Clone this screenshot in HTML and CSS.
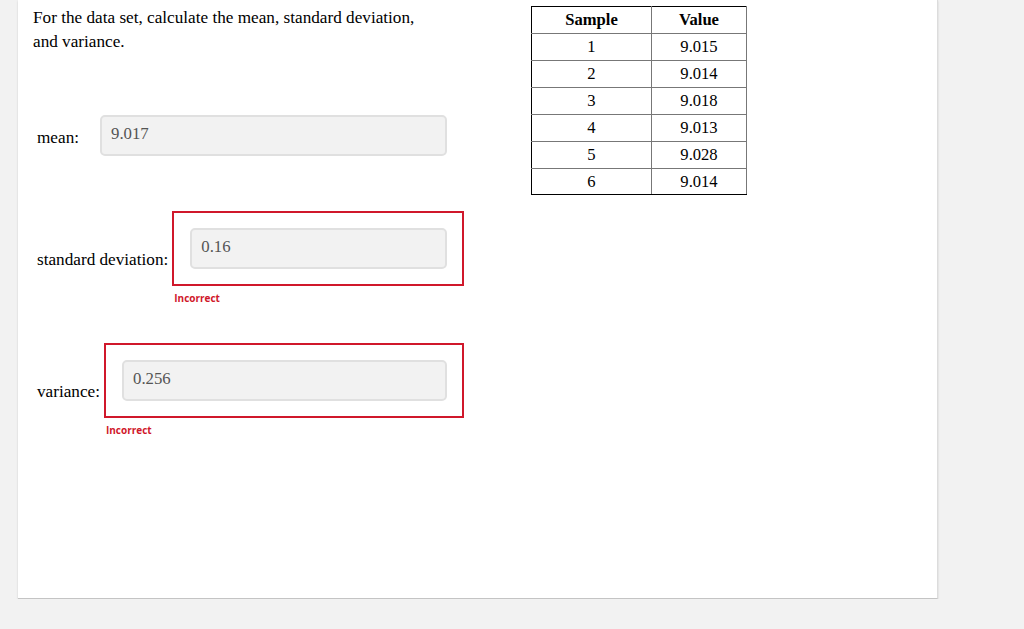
FILE: index.html
```html
<!DOCTYPE html>
<html>
<head>
<meta charset="utf-8">
<link rel="stylesheet" href="styles.css">
</head>
<body>
<div class="card">
  <div class="left">
    <p class="question">For the data set, calculate the mean, standard deviation, and variance.</p>

    <div class="row row-mean">
      <span class="label label-mean">mean:</span>
      <div class="field">
        <div class="input">9.017</div>
      </div>
    </div>

    <div class="row row-sd">
      <span class="label">standard deviation:</span>
      <div class="fieldcol">
        <div class="field wrong">
          <div class="input">0.16</div>
        </div>
        <div class="feedback">Incorrect</div>
      </div>
    </div>

    <div class="row row-var">
      <span class="label">variance:</span>
      <div class="fieldcol">
        <div class="field wrong">
          <div class="input">0.256</div>
        </div>
        <div class="feedback fb-var">Incorrect</div>
      </div>
    </div>
  </div>

  <table class="data">
    <thead>
      <tr><th class="c1">Sample</th><th class="c2">Value</th></tr>
    </thead>
    <tbody>
      <tr><td>1</td><td>9.015</td></tr>
      <tr><td>2</td><td>9.014</td></tr>
      <tr><td>3</td><td>9.018</td></tr>
      <tr><td>4</td><td>9.013</td></tr>
      <tr><td>5</td><td>9.028</td></tr>
      <tr><td>6</td><td>9.014</td></tr>
    </tbody>
  </table>
</div>
</body>
</html>
```
FILE: styles.css
```css
html, body {
  margin: 0;
  padding: 0;
  background: #f2f2f2;
}
body {
  font-family: "Liberation Serif", "Times New Roman", serif;
  font-size: 17.2px;
  color: #000;
}
.card {
  margin-left: 18px;
  width: 920px;
  height: 599px;
  background: #fff;
  border-bottom: 1px solid #c4c4c4;
  border-right: 1px solid #dcdcdc;
  box-shadow: 0 1px 2px rgba(0, 0, 0, 0.15);
  box-sizing: border-box;
  padding: 6px 0 0 15px;
  display: flex;
  align-items: flex-start;
}
.left {
  width: 431px;
  flex: none;
}
.question {
  margin: 0;
  width: 395px;
  line-height: 24px;
}
.row {
  display: flex;
  align-items: flex-start;
  padding-left: 4px;
}
.row-mean { margin-top: 44px; }
.row-sd { margin-top: 38px; }
.row-var { margin-top: 38px; }
.label {
  line-height: 20px;
  margin-top: 39px;
  margin-right: 4px;
  white-space: nowrap;
}
.label-mean { margin-top: 30px; margin-right: 3px; }
.fieldcol {
  flex: 1;
  display: flex;
  flex-direction: column;
}
.field {
  flex: 1;
  border: 2px solid transparent;
  padding: 15px 15px 15px 16px;
}
.field.wrong {
  border-color: #d0182b;
}
.input {
  box-sizing: border-box;
  height: 41px;
  background: #f2f2f2;
  border: 2px solid #e0e0e0;
  border-radius: 5px;
  padding: 7px 0 0 9px;
  color: #555;
  line-height: 20px;
  font-size: 16.8px;
}
.feedback {
  margin-top: 5px;
  padding-left: 2px;
  font-family: "Open Sans", "Liberation Sans", sans-serif;
  font-weight: 700;
  font-size: 10px;
  line-height: 14px;
  color: #d0182b;
}
.data {
  margin-left: 67px;
  border-collapse: collapse;
  border: 1px solid #000;
  border-right-color: #666;
  flex: none;
  font-size: 16.6px;
}
.data th, .data td {
  border: 1px solid #777;
  height: 26px;
  padding: 0;
  text-align: center;
  line-height: 20px;
}
.data th { font-weight: 700; }
.data thead th { border-top-color: #000; }
.data tbody tr:last-child td { border-bottom-color: #000; height: 25px; }
.data td:first-child, .data th:first-child { border-left-color: #000; }
.c1 { width: 119px; }
.c2 { width: 94px; }
```
